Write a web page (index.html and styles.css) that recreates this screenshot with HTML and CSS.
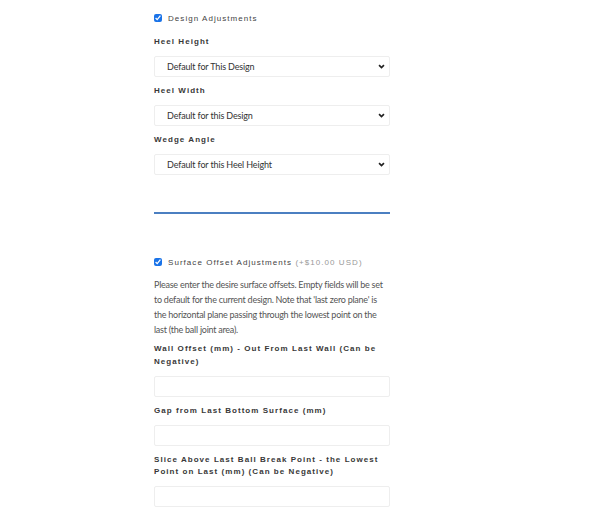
FILE: index.html
```html
<!DOCTYPE html>
<html>
<head>
<meta charset="utf-8">
<link rel="stylesheet" href="styles.css">
</head>
<body>
<div class="form">
  <label class="check-row first">
    <input type="checkbox" checked>
    <span class="check-text">Design Adjustments</span>
  </label>

  <div class="field">
    <div class="label">Heel Height</div>
    <div class="select"><span>Default for This Design</span><svg class="chev" viewBox="0 0 10 7" width="7" height="5"><path d="M1.5 1.5l3.5 3.5 3.5-3.5" fill="none" stroke="#222" stroke-width="2.4"/></svg></div>
  </div>
  <div class="field">
    <div class="label">Heel Width</div>
    <div class="select"><span>Default for this Design</span><svg class="chev" viewBox="0 0 10 7" width="7" height="5"><path d="M1.5 1.5l3.5 3.5 3.5-3.5" fill="none" stroke="#222" stroke-width="2.4"/></svg></div>
  </div>
  <div class="field">
    <div class="label">Wedge Angle</div>
    <div class="select"><span>Default for this Heel Height</span><svg class="chev" viewBox="0 0 10 7" width="7" height="5"><path d="M1.5 1.5l3.5 3.5 3.5-3.5" fill="none" stroke="#222" stroke-width="2.4"/></svg></div>
  </div>

  <div class="divider"></div>

  <label class="check-row second">
    <input type="checkbox" checked>
    <span class="check-text">Surface Offset Adjustments <span class="price">(+$10.00 USD)</span></span>
  </label>

  <p class="desc">Please enter the desire surface offsets. Empty fields will be set to default for the current design. Note that 'last zero plane' is the horizontal plane passing through the lowest point on the last (the ball joint area).</p>

  <div class="field">
    <div class="label">Wall Offset (mm) - Out From Last Wall (Can be Negative)</div>
    <div class="input"></div>
  </div>
  <div class="field">
    <div class="label">Gap from Last Bottom Surface (mm)</div>
    <div class="input"></div>
  </div>
  <div class="field">
    <div class="label">Slice Above Last Ball Break Point - the Lowest Point on Last (mm) (Can be Negative)</div>
    <div class="input"></div>
  </div>
</div>
</body>
</html>
```
FILE: styles.css
```css
html, body {
  margin: 0;
  padding: 0;
  background: #fff;
}
.form {
  margin-left: 154px;
  width: 236px;
  padding-top: 13px;
  font-family: "Liberation Sans", Arial, sans-serif;
}
.check-row {
  display: flex;
  align-items: center;
  gap: 6px;
  height: 10px;
}
.check-row input {
  margin: 0;
  width: 8px;
  height: 8px;
  accent-color: #1a73e8;
}
.check-text {
  font-size: 8px;
  letter-spacing: 1.05px;
  color: #444;
}
.price {
  color: #999;
}
.check-row.first {
  margin-bottom: 13px;
}
.field {
  margin-bottom: 8px;
}
.label {
  font-size: 8px;
  font-weight: bold;
  letter-spacing: 1.05px;
  line-height: 12.5px;
  color: #383838;
  margin-bottom: 7.5px;
}
.select, .input {
  height: 21px;
  box-sizing: border-box;
  border: 1px solid #eeeeee;
  border-radius: 2px;
  display: flex;
  align-items: center;
  justify-content: space-between;
  padding: 0 4px 0 12px;
}
.select span {
  font-family: Lato, "Open Sans", sans-serif;
  font-size: 9px;
  letter-spacing: -0.15px;
  color: #333;
}
.divider {
  height: 2px;
  background: #4b7fc1;
  margin-top: 37px;
  margin-bottom: 43px;
}
.check-row.second {
  margin-bottom: 10px;
}
.desc {
  margin: 0 0 6px;
  font-family: Lato, "Open Sans", sans-serif;
  font-size: 9px;
  letter-spacing: -0.25px;
  line-height: 15px;
  color: #555;
}
```
